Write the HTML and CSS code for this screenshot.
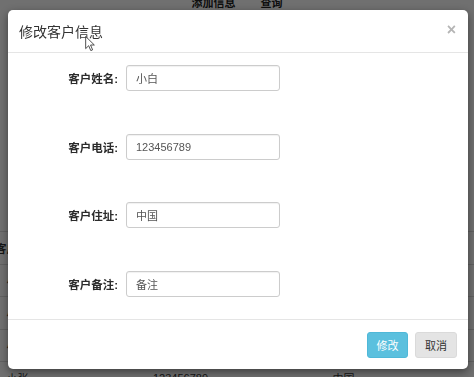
FILE: index.html
```html
<!DOCTYPE html>
<html lang="zh-CN">
<head>
  <meta charset="UTF-8">
  <meta name="viewport" content="width=device-width, initial-scale=1.0">
  <title>客户信息管理</title>
  <link rel="stylesheet" href="styles.css">
</head>
<body>

<div class="page">
  <nav class="topnav">
    <a href="#">添加信息</a>
    <a href="#">查询</a>
  </nav>

  <div class="content">
    <table class="list">
      <tr>
        <th>客户姓名</th>
        <th>客户电话</th>
        <th>客户住址</th>
        <th>操作</th>
      </tr>
      <tr>
        <td>小白</td>
        <td>123456789</td>
        <td>中国</td>
        <td>修改</td>
      </tr>
      <tr>
        <td>小红</td>
        <td>123456789</td>
        <td>中国</td>
        <td>修改</td>
      </tr>
      <tr>
        <td>小明</td>
        <td>123456789</td>
        <td>中国</td>
        <td>修改</td>
      </tr>
      <tr>
        <td>小张</td>
        <td>123456789</td>
        <td>中国</td>
        <td>修改</td>
      </tr>
    </table>
  </div>
</div>

<div class="backdrop"></div>

<div class="modal">
  <div class="modal-header">
    <h4>修改客户信息</h4>
    <span class="close">&times;</span>
  </div>

  <div class="modal-body">
    <div class="form-row">
      <label>客户姓名:</label>
      <input type="text" value="小白">
    </div>
    <div class="form-row">
      <label>客户电话:</label>
      <input type="text" value="123456789">
    </div>
    <div class="form-row">
      <label>客户住址:</label>
      <input type="text" value="中国">
    </div>
    <div class="form-row">
      <label>客户备注:</label>
      <input type="text" value="备注">
    </div>
  </div>

  <div class="modal-footer">
    <button class="btn btn-info">修改</button>
    <button class="btn btn-default">取消</button>
  </div>
</div>

<!-- mouse pointer -->
<svg class="cursor" width="10" height="15" viewBox="0 0 12 19">
  <path d="M0.5 0.5 L0.5 16 L4.3 12.3 L7 18.5 L9.3 17.5 L6.7 11.4 L11.5 11.4 Z" fill="#fff" stroke="#222" stroke-width="1"/>
</svg>

</body>
</html>
```

FILE: styles.css
```css
html, body {
  margin: 0;
  padding: 0;
  overflow: hidden;
}
body {
  font-family: "Liberation Sans", "Noto Sans CJK SC", sans-serif;
  font-size: 11px;
  color: #333;
  background-color: #fff;
  width: 474px;
  height: 377px;
}
.topnav {
  display: flex;
  justify-content: center;
  gap: 25px;
  margin-top: -4px;
  line-height: 14px;
}
.topnav a {
  color: #222;
  font-weight: bold;
  text-decoration: none;
}
.content {
  padding-top: 221px;
}
.list {
  border-collapse: collapse;
  margin-left: -64px;
  table-layout: fixed;
  width: 652px;
}
.list th, .list td {
  width: 163px;
  height: 31.5px;
  padding: 0;
  text-align: center;
  border-top: 1px solid #ddd;
}
.list th {
  font-weight: bold;
}
.backdrop {
  position: fixed;
  top: 0;
  left: 0;
  right: 0;
  bottom: 0;
  background-color: rgba(0, 0, 0, 0.56);
}
.modal {
  position: absolute;
  top: 10px;
  left: 8px;
  width: 460px;
  background-color: #fff;
  border-radius: 5px;
  box-shadow: 0 3px 8px rgba(0, 0, 0, 0.45);
}
.modal-header {
  display: flex;
  align-items: center;
  justify-content: space-between;
  height: 42px;
  padding: 0 12px 0 11px;
  border-bottom: 1px solid #e5e5e5;
}
.modal-header h4 {
  margin: 0;
  font-size: 14px;
  font-weight: normal;
  color: #333;
}
.close {
  font-size: 16px;
  font-weight: bold;
  color: #b5b5b5;
  line-height: 1;
  margin-top: -3px;
}
.modal-body {
  display: flex;
  flex-direction: column;
  gap: 42.5px;
  padding: 12px 11px 22.5px;
}
.form-row {
  display: grid;
  grid-template-columns: 99px 154px;
  column-gap: 8px;
  align-items: center;
}
.form-row label {
  text-align: right;
  font-size: 11.5px;
  font-weight: bold;
  color: #2b2b2b;
}
.form-row input {
  box-sizing: border-box;
  height: 26px;
  padding: 0 9px;
  border: 1px solid #ccc;
  border-radius: 3px;
  font-family: inherit;
  font-size: 11px;
  color: #555;
  box-shadow: inset 0 1px 1px rgba(0, 0, 0, 0.06);
}
.modal-footer {
  display: flex;
  justify-content: flex-end;
  gap: 7px;
  padding: 12px 11px 11px;
  border-top: 1px solid #e5e5e5;
}
.btn {
  height: 26px;
  padding: 0;
  border: 1px solid transparent;
  border-radius: 3px;
  font-family: inherit;
  font-size: 11px;
  white-space: nowrap;
}
.btn-info {
  width: 41px;
  background-color: #5bc0de;
  border-color: #4fb8d8;
  color: #fff;
}
.btn-default {
  width: 42px;
  background-color: #e4e4e4;
  border-color: #dadada;
  color: #333;
}
.cursor {
  position: absolute;
  top: 36px;
  left: 85px;
}
```
